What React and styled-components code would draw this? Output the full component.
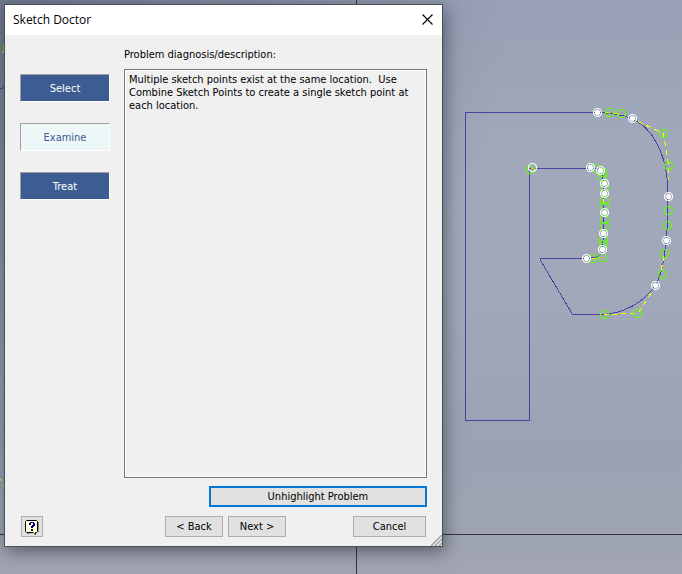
import React from "react";
import styled, { createGlobalStyle, css } from "styled-components";

const GlobalStyle = createGlobalStyle`
  *, *::before, *::after { box-sizing: border-box; }
  body {
    margin: 0;
    font: 11px/13px "DejaVu Sans Condensed", "DejaVu Sans", sans-serif;
    color: #000;
  }
`;

const Workspace = styled.main`
  position: relative;
  display: grid;
  grid-template-columns: minmax(0, 439fr) minmax(0, 239fr);
  min-height: 100vh;
  padding: 4px 0 27px 4px;
  overflow: hidden;
  background:
    radial-gradient(ellipse 75% 90% at 0 0, rgba(82, 90, 112, 0.6), rgba(120, 130, 150, 0) 100%),
    linear-gradient(180deg, #98a1b5 0%, #a0a8ba 25%, #a0a8ba 50%, #9aa3b3 78%, #a1a5b1 100%);
`;

const SketchCanvas = styled.svg`
  position: absolute;
  inset: 0;
  width: 100%;
  height: 100%;
`;

const Dialog = styled.section`
  position: relative;
  display: flex;
  flex-direction: column;
  border: 1px solid #4b4f57;
  background: #f0f0f0;
  box-shadow: 2px 5px 16px rgba(20, 26, 40, 0.5);
`;

const TitleBar = styled.header`
  display: flex;
  align-items: center;
  justify-content: space-between;
  height: 30px;
  padding-left: 8px;
  background: #fff;
`;

const Title = styled.h1`
  margin: 0;
  font: 12px/16px "Open Sans", sans-serif;
`;

const CloseButton = styled.button`
  display: grid;
  place-items: center;
  width: 30px;
  height: 30px;
  padding: 0 0 2px;
  border: 0;
  background: transparent;
`;

const Body = styled.div`
  flex: 1;
  display: grid;
  grid-template-columns: 90px minmax(0, 1fr);
  gap: 14px;
  padding: 13px 15px 9px;
`;

const Steps = styled.nav`
  display: flex;
  flex-direction: column;
  gap: 21px;
  padding-top: 26px;
`;

const StepButton = styled.button`
  height: 28px;
  padding: 0;
  border: 1px solid;
  border-color: #a0a0a0 #fff #fff #a0a0a0;
  background: ${({ $current }) => ($current ? "#eef7f7" : "#3c5c92")};
  color: ${({ $current }) => ($current ? "#3c5c92" : "#fff")};
  font: inherit;
`;

const Diagnosis = styled.div`
  display: flex;
  flex-direction: column;
  align-items: stretch;
`;

const DiagnosisLabel = styled.label`
  margin-bottom: 8px;
`;

const DiagnosisText = styled.textarea`
  flex: 1;
  display: block;
  width: 100%;
  margin: 0;
  padding: 3px 4px;
  border: 1px solid #777;
  border-radius: 0;
  outline: 0;
  box-shadow: inset 0 0 0 1px #fff;
  background: #f0f0f0;
  color: #000;
  font: inherit;
  resize: none;
`;

const PushButton = styled.button`
  height: 21px;
  min-width: ${({ $wide }) => ($wide ? "73px" : "58px")};
  padding: 0;
  border: 1px solid #adadad;
  background: #e1e1e1;
  color: #000;
  font: inherit;
  ${({ $highlighted }) =>
    $highlighted &&
    css`
      width: 72%;
      align-self: flex-end;
      margin-top: 8px;
      border: 2px solid #0078d7;
    `}
`;

const Footer = styled.footer`
  display: grid;
  grid-template-columns: 144px 1fr auto;
  padding: 0 16px 9px;
`;

const HelpButton = styled.button`
  display: grid;
  place-items: center;
  width: 22px;
  height: 21px;
  padding: 0;
  border: 1px solid #adadad;
  background: #e1e1e1;
`;

const PageButtons = styled.div`
  display: flex;
  gap: 5px;
`;

const ResizeGrip = styled.svg`
  position: absolute;
  right: 0;
  bottom: 0;
`;

const OUTLINE =
  "M465.5 112.5H597Q616 113 632 118.500C650 127 668 150 668 196Q668 224 666 240Q664 270 655.500 285.500C643 303 623 314 601 314.500H572.500L540 259.500V258.500H586C596 258 602 256 602.500 249L603.500 234V184Q603 171 598 169.500Q594 167.500 590 168.500H529.500V420.500H465.500Z";

const HANDLES = [
  "M605 112.500L622 114.500",
  "M638 121.500L663.500 133.500L668.500 165.500V180",
  "M664 256L661 272",
  "M651 293L638 313.500L604 314.500",
  "M592 258.500L602 257.500",
  "M603.500 199V206",
];

const CONTROL_POINTS = [
  [609.5, 112.5], [621.5, 113.5], [663.5, 133.5], [668.5, 165.5],
  [668.5, 210.5], [667.5, 225.5], [664.5, 253.5], [662.5, 274.5],
  [637.5, 313.5], [604.5, 314.5], [530.5, 169.5],
  [596.5, 168.5], [603.5, 172.5], [602.5, 177.5], [604.5, 188.5],
  [604.5, 200.5], [604.5, 206.5], [604.5, 219.5], [604.5, 226.5],
  [603.5, 239.5], [603.5, 244.5], [592.5, 258.5], [602.5, 257.5],
];

const SKETCH_POINTS = [
  [597.5, 112.5], [632.5, 118.5], [668.5, 196.5], [666.5, 240.5],
  [655.5, 285.5], [590.5, 167.5], [600.5, 170.5], [604.5, 183.5],
  [604.5, 193.5], [604.5, 212.5], [603.5, 233.5], [602.5, 249.5],
  [586.5, 258.5],
];

function Sketch() {
  return (
    <SketchCanvas viewBox="0 0 682 574" preserveAspectRatio="xMidYMid slice" fill="none" aria-hidden="true">
      <g shapeRendering="crispEdges">
        <path d="M356.500 0V574M0 534.500H682" stroke="#343438" />
        <path d="M0 88.500H2L5 85" stroke="#4545a0" />
        <path d="M2 53L5 50M0 479L2 481" stroke="#ff0" />
        <path d="M5 44Q2 46 4 50M5 483Q2 485 5 488" stroke="#5f0" />
      </g>
      <path d={OUTLINE} stroke="#4646a0" shapeRendering="crispEdges" />
      {HANDLES.map((d) => (
        <path key={d} d={d} stroke="#ff0" strokeDasharray="5 4" shapeRendering="crispEdges" />
      ))}
      {CONTROL_POINTS.map(([x, y]) => (
        <circle key={`${x}-${y}`} cx={x} cy={y} r="4" stroke="#5cff00" strokeWidth="1.2" />
      ))}
      {SKETCH_POINTS.map(([x, y]) => (
        <g key={`${x}-${y}`}>
          <circle cx={x} cy={y} r="4" stroke="#fff" strokeWidth="1.2" />
          <path d={`M${x - 2.5} ${y - 1.5}h1v-1h3v1h1v3h-1v1h-3v-1h-1z`} fill="#fff" />
        </g>
      ))}
      <circle cx="532.5" cy="167.5" r="4" stroke="#fff" strokeWidth="1.2" />
      <path d="M531 168.500h3" stroke="#f0b000" />
    </SketchCanvas>
  );
}

function CloseIcon() {
  return (
    <svg width="11" height="11" fill="none" stroke="#000" aria-hidden="true">
      <path d="M.5 .5L10.500 10.500M10.500 .5L.5 10.500" strokeWidth="1.1" />
    </svg>
  );
}

function HelpIcon() {
  return (
    <svg width="16" height="16" aria-hidden="true">
      <path d="M3 15V14H14V3H15V13L14 14H12V16H10V14Z" fill="#888" />
      <path d="M2.500 1.500H12.500L13.500 2.500V12.500L12.500 13.500H11.500V15L9.500 13.500H2.500L1.500 12.500V2.500Z" fill="#fffff0" stroke="#000" />
      <path d="M3 3.500H13M3 5.500H13M3 7.500H13M3 9.500H13M3 11.500H13" stroke="#ffff70" strokeDasharray="1 1" />
      <path d="M9 13L11 15V13" fill="#ff0" />
      <path
        d="M5 4H6V3H10V4H11V7H10V8H9V9H7V7H8V6H9V4H7V6H5ZM7 10H9V12H7Z"
        fill="#000080"
        shapeRendering="crispEdges"
      />
    </svg>
  );
}

const STEPS = ["Select", "Examine", "Treat"];

const MESSAGE =
  "Multiple sketch points exist at the same location.  Use Combine Sketch Points to create a single sketch point at each location.";

export default function App() {
  return (
    <>
      <GlobalStyle />
      <Workspace>
        <Sketch />
        <Dialog role="dialog" aria-labelledby="dialog-title">
          <TitleBar>
            <Title id="dialog-title">Sketch Doctor</Title>
            <CloseButton type="button" aria-label="Close">
              <CloseIcon />
            </CloseButton>
          </TitleBar>
          <Body>
            <Steps aria-label="Steps">
              {STEPS.map((step) => (
                <StepButton key={step} type="button" $current={step === "Examine"}>
                  {step}
                </StepButton>
              ))}
            </Steps>
            <Diagnosis>
              <DiagnosisLabel htmlFor="diagnosis">Problem diagnosis/description:</DiagnosisLabel>
              <DiagnosisText id="diagnosis" readOnly value={MESSAGE} />
              <PushButton type="button" $highlighted>
                Unhighlight Problem
              </PushButton>
            </Diagnosis>
          </Body>
          <Footer>
            <HelpButton type="button" aria-label="Help">
              <HelpIcon />
            </HelpButton>
            <PageButtons>
              <PushButton type="button">&lt; Back</PushButton>
              <PushButton type="button">Next &gt;</PushButton>
            </PageButtons>
            <PushButton type="button" $wide>
              Cancel
            </PushButton>
          </Footer>
          <ResizeGrip width="12" height="12" stroke="#a0a0a0" aria-hidden="true">
            <path d="M1 12L12 1M5 12L12 5M9 12L12 9" strokeWidth="1.5" />
          </ResizeGrip>
        </Dialog>
      </Workspace>
    </>
  );
}
